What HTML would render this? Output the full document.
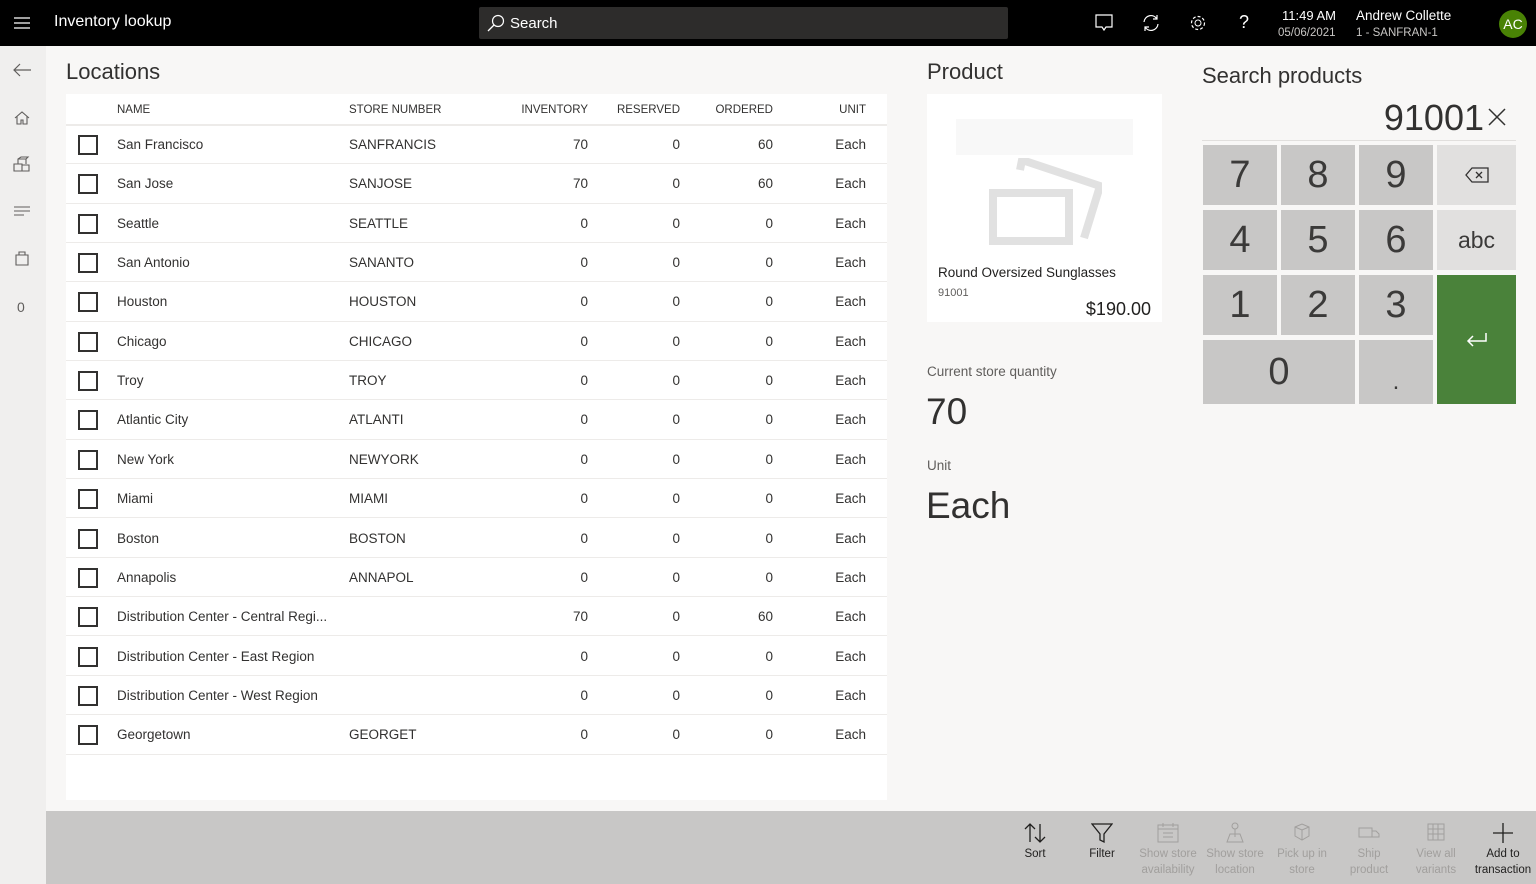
<!DOCTYPE html>
<html><head><meta charset="utf-8"><style>
*{margin:0;padding:0;box-sizing:border-box}
body{width:1536px;height:884px;overflow:hidden;background:#f8f7f6;font-family:"Segoe UI","Liberation Sans",sans-serif;color:#201f1e;position:relative}
.top{position:absolute;left:0;top:0;width:1536px;height:46px;background:#000;color:#fff}
.side{position:absolute;left:0;top:46px;width:46px;height:838px;background:#f0efee}
.abs{position:absolute}
.tbl{position:absolute;left:66px;top:94px;width:821px;background:#fff;height:706px}
.row{position:absolute;left:0;width:821px;height:39.3px;border-bottom:1px solid #edebe9;font-size:13.5px;color:#323130}
.row span{position:absolute;top:12px}
.cb{position:absolute;left:12px;top:10px;width:20px;height:20px;border:2px solid #323130}
.hd{font-size:11.5px;color:#323130}
.k{position:absolute;background:#c8c7c6;display:flex;align-items:center;justify-content:center;font-size:38px;color:#3b3a39}
.bb{position:absolute;top:811px;left:46px;width:1490px;height:73px;background:#c8c7c6}
.bt{position:absolute;top:822px;width:66px;text-align:center;font-size:11.5px;line-height:16px;color:#201f1e}
.bt svg{display:block;margin:0 auto 2px}
.dis{color:#a19f9d}
.lt{color:#323130}
</style></head><body>
<div class="top">
<svg class="abs" style="left:14px;top:17px" width="16" height="14"><path d="M0 1h16M0 6h16M0 11h16" stroke="#fff" stroke-width="1.3"/></svg>
<div class="abs" style="left:54px;top:13px;font-size:16px">Inventory lookup</div>
<div class="abs" style="left:479px;top:7px;width:529px;height:32px;background:#2d2c2b;border-radius:2px"></div>
<svg class="abs" style="left:487px;top:14px" width="18" height="18"><circle cx="11" cy="7" r="5.5" fill="none" stroke="#fff" stroke-width="1.2"/><path d="M7 11L1 17" stroke="#fff" stroke-width="1.3"/></svg>
<div class="abs" style="left:510px;top:15px;font-size:15px;color:#fff">Search</div>
<svg class="abs" style="left:1095px;top:14px" width="18" height="18"><path d="M1 1h16v12h-6l-2 3-2-3H1z" fill="none" stroke="#fff" stroke-width="1.2"/></svg>
<svg class="abs" style="left:1142px;top:14px" width="18" height="18"><path d="M2 8a7 7 0 0 1 13-3M16 10a7 7 0 0 1-13 3M15 1v4h-4M3 17v-4h4" fill="none" stroke="#fff" stroke-width="1.2"/></svg>
<svg class="abs" style="left:1189px;top:14px" width="18" height="18"><circle cx="9" cy="9" r="3" fill="none" stroke="#fff"/><circle cx="9" cy="9" r="6.5" fill="none" stroke="#fff" stroke-width="1.2" stroke-dasharray="3 2"/></svg>
<div class="abs" style="left:1239px;top:12px;font-size:18px">?</div>
<div class="abs" style="left:1282px;top:8px;font-size:13px">11:49 AM</div>
<div class="abs" style="left:1278px;top:27px;font-size:11.5px;color:#c8c6c4">05/06/2021</div>
<div class="abs" style="left:1356px;top:8px;font-size:13.5px">Andrew Collette</div>
<div class="abs" style="left:1356px;top:27px;font-size:11.5px;color:#c8c6c4">1 - SANFRAN-1</div>
<div class="abs" style="left:1499px;top:10px;width:28px;height:28px;border-radius:50%;background:#498205;font-size:14px;text-align:center;line-height:28px">AC</div>
</div>
<div class="side">
<svg class="abs" style="left:13px;top:17px" width="18" height="14"><path d="M18 7H1M7 1L1 7l6 6" fill="none" stroke="#605e5c" stroke-width="1.2"/></svg>
<svg class="abs" style="left:14px;top:65px" width="16" height="14"><path d="M1 7L8 1l7 6M3 5v8h4V9h2v4h4V5" fill="none" stroke="#605e5c" stroke-width="1.1"/></svg>
<svg class="abs" style="left:13px;top:110px" width="18" height="16"><path d="M1 8h8v7H1zM9 9h7v6H9zM5 3h8v5M5 8V3l3-2h7l-2 2" fill="none" stroke="#605e5c" stroke-width="1.1"/></svg>
<svg class="abs" style="left:14px;top:160px" width="16" height="10"><path d="M0 1h16M0 5h16M0 9h10" stroke="#605e5c" stroke-width="1.1"/></svg>
<svg class="abs" style="left:15px;top:204px" width="14" height="16"><path d="M1 5h12v10H1zM4 5V2h6v3" fill="none" stroke="#605e5c" stroke-width="1.1"/></svg>
<div class="abs" style="left:17px;top:253px;font-size:14px;color:#605e5c">0</div>
</div>
<div class="abs lt" style="left:66px;top:59px;font-size:22px">Locations</div>
<div class="tbl">
<div class="hd">
<span class="abs" style="left:51px;top:10px">NAME</span>
<span class="abs" style="left:283px;top:10px">STORE NUMBER</span>
<span class="abs" style="right:299px;top:10px">INVENTORY</span>
<span class="abs" style="right:207px;top:10px">RESERVED</span>
<span class="abs" style="right:114px;top:10px">ORDERED</span>
<span class="abs" style="right:21px;top:10px">UNIT</span>
</div>
<div class="abs" style="left:0;top:30px;width:821px;height:2px;background:#edebe9"></div>
</div>
<div id="rows"></div>
<script>
var d=[["San Francisco","SANFRANCIS",70,0,60],["San Jose","SANJOSE",70,0,60],["Seattle","SEATTLE",0,0,0],["San Antonio","SANANTO",0,0,0],["Houston","HOUSTON",0,0,0],["Chicago","CHICAGO",0,0,0],["Troy","TROY",0,0,0],["Atlantic City","ATLANTI",0,0,0],["New York","NEWYORK",0,0,0],["Miami","MIAMI",0,0,0],["Boston","BOSTON",0,0,0],["Annapolis","ANNAPOL",0,0,0],["Distribution Center - Central Regi...","",70,0,60],["Distribution Center - East Region","",0,0,0],["Distribution Center - West Region","",0,0,0],["Georgetown","GEORGET",0,0,0]];
var h="";d.forEach(function(r,i){var t=125+i*39.35;h+='<div class="row" style="left:66px;top:'+t+'px"><div class="cb"></div><span style="left:51px">'+r[0]+'</span><span style="left:283px">'+r[1]+'</span><span style="right:299px">'+r[2]+'</span><span style="right:207px">'+r[3]+'</span><span style="right:114px">'+r[4]+'</span><span style="right:21px">Each</span></div>'});
document.getElementById("rows").innerHTML=h;
</script>
<div class="abs lt" style="left:927px;top:59px;font-size:22px">Product</div>
<div class="abs" style="left:927px;top:94px;width:235px;height:228px;background:#fff">
<div class="abs" style="left:29px;top:25px;width:177px;height:36px;background:#f8f8f8"></div>
<svg class="abs" style="left:60px;top:64px" width="115" height="90"><path d="M33 12L35 2 113 28 97 80" fill="none" stroke="#e1e1e1" stroke-width="8"/><rect x="6" y="35" width="76" height="48" fill="none" stroke="#e1e1e1" stroke-width="8"/></svg>
<div class="abs" style="left:11px;top:171px;font-size:13.5px">Round Oversized Sunglasses</div>
<div class="abs" style="left:11px;top:193px;font-size:11px;color:#605e5c">91001</div>
<div class="abs" style="right:11px;top:205px;font-size:18px">$190.00</div>
</div>
<div class="abs" style="left:927px;top:364px;font-size:13.5px;color:#605e5c">Current store quantity</div>
<div class="abs lt" style="left:926px;top:391px;font-size:37px">70</div>
<div class="abs" style="left:927px;top:458px;font-size:13.5px;color:#605e5c">Unit</div>
<div class="abs lt" style="left:926px;top:485px;font-size:37px">Each</div>
<div class="abs lt" style="left:1202px;top:63px;font-size:22px">Search products</div>
<div class="abs lt" style="right:52px;top:97px;font-size:36px">91001</div>
<svg class="abs" style="left:1487px;top:107px" width="20" height="20"><path d="M2 2l16 16M18 2L2 18" stroke="#323130" stroke-width="1.5"/></svg>
<div class="abs" style="left:1202px;top:140px;width:314px;height:1px;background:#e1dfdd"></div>
<div class="k" style="left:1203px;top:145px;width:74px;height:60px">7</div>
<div class="k" style="left:1281px;top:145px;width:74px;height:60px">8</div>
<div class="k" style="left:1359px;top:145px;width:74px;height:60px">9</div>
<div class="k" style="left:1437px;top:145px;width:79px;height:60px;background:#e1e0df"><svg width="26" height="18"><path d="M8 2h16v14H8L2 9z" fill="none" stroke="#323130" stroke-width="1.3"/><path d="M12 6l6 6M18 6l-6 6" stroke="#323130" stroke-width="1.3"/></svg></div>
<div class="k" style="left:1203px;top:210px;width:74px;height:60px">4</div>
<div class="k" style="left:1281px;top:210px;width:74px;height:60px">5</div>
<div class="k" style="left:1359px;top:210px;width:74px;height:60px">6</div>
<div class="k" style="left:1437px;top:210px;width:79px;height:60px;background:#e1e0df;font-size:23px">abc</div>
<div class="k" style="left:1203px;top:275px;width:74px;height:60px">1</div>
<div class="k" style="left:1281px;top:275px;width:74px;height:60px">2</div>
<div class="k" style="left:1359px;top:275px;width:74px;height:60px">3</div>
<div class="k" style="left:1437px;top:275px;width:79px;height:129px;background:#4a823a"><svg width="22" height="16"><path d="M20 1v8H2M7 4L2 9l5 5" fill="none" stroke="#fff" stroke-width="1.5"/></svg></div>
<div class="k" style="left:1203px;top:340px;width:152px;height:64px">0</div>
<div class="k" style="left:1359px;top:340px;width:74px;height:64px;align-items:flex-end;padding-bottom:8px;font-size:24px">.</div>
<div class="bb"></div>
<div class="bt" style="left:1002px"><svg width="22" height="22"><path d="M6 20V2M1 7l5-5 5 5M16 2v18M11 15l5 5 5-5" fill="none" stroke="#201f1e" stroke-width="1.3"/></svg>Sort</div>
<div class="bt" style="left:1069px"><svg width="22" height="22"><path d="M1 2h20l-8 10v8l-4-2v-6z" fill="none" stroke="#201f1e" stroke-width="1.3"/></svg>Filter</div>
<div class="bt dis" style="left:1135px"><svg width="22" height="22"><rect x="1" y="3" width="20" height="17" fill="none" stroke="#a19f9d"/><path d="M1 7h20M6 1v4M16 1v4M6 11h10M6 15h10" stroke="#a19f9d"/></svg>Show store availability</div>
<div class="bt dis" style="left:1202px"><svg width="22" height="22"><circle cx="11" cy="4" r="3" fill="none" stroke="#a19f9d"/><path d="M11 7v8M3 20l3-8h10l3 8z" fill="none" stroke="#a19f9d"/></svg>Show store location</div>
<div class="bt dis" style="left:1269px"><svg width="22" height="22"><path d="M4 5l7-3 7 3v9l-7 4-7-4zM4 5l7 3 7-3M11 8v10" fill="none" stroke="#a19f9d"/></svg>Pick up in store</div>
<div class="bt dis" style="left:1336px"><svg width="22" height="22"><path d="M1 6h13v9H1zM14 9h4l3 3v3h-7" fill="none" stroke="#a19f9d"/></svg>Ship<br>product</div>
<div class="bt dis" style="left:1403px"><svg width="22" height="22"><rect x="3" y="2" width="16" height="16" fill="none" stroke="#a19f9d"/><path d="M3 7h16M3 12h16M8 2v16M13 2v16" stroke="#a19f9d"/></svg>View all variants</div>
<div class="bt" style="left:1470px"><svg width="22" height="22"><path d="M11 1v20M1 11h20" stroke="#201f1e" stroke-width="1.3"/></svg>Add to transaction</div>
</body></html>
